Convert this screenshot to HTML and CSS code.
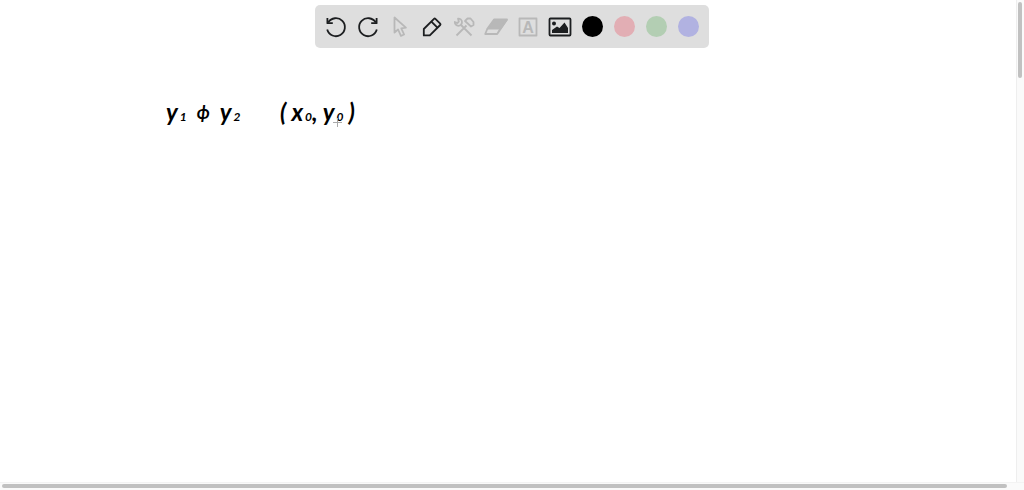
FILE: index.html
```html
<!DOCTYPE html>
<html lang="en">
<head>
    <meta charset="UTF-8">
    <meta name="viewport" content="width=device-width, initial-scale=1.0">
    <title>Whiteboard</title>
    <link rel="stylesheet" href="styles.css">
</head>
<body>
    <header class="toolbar" role="toolbar" aria-label="Drawing tools">
        <button type="button" class="tool" aria-label="Undo">
            <svg viewBox="0 0 24 24"><path d="M4.2 7.5A9 9 0 1 1 3.2 14.6"/><path d="M3.4 3v5.2h5.4"/></svg>
        </button>
        <button type="button" class="tool" aria-label="Redo">
            <svg viewBox="0 0 24 24"><path d="M19.8 7.5A9 9 0 1 0 20.8 14.6"/><path d="M20.6 3v5.2h-5.4"/></svg>
        </button>
        <button type="button" class="tool muted" aria-label="Select">
            <svg viewBox="0 0 24 24"><path d="M6.5 2.5v15l3.6-3 2.8 6.4 3.2-1.4-2.8-6.2 4.6-.6z"/></svg>
        </button>
        <button type="button" class="tool" aria-label="Pen">
            <svg viewBox="0 0 24 24"><path d="M3.8 20.4V14L14 3.8a1 1 0 0 1 1.4 0l4.8 4.8a1 1 0 0 1 0 1.4L9.8 20.4z"/><path d="M11.4 6.6l6 6"/></svg>
        </button>
        <button type="button" class="tool muted" aria-label="Tools">
            <svg viewBox="0 0 24 24"><path d="M4.5 20.5L14.5 10.5M19.5 20.5L9 10"/><path d="M13 6l2.5-2.5h3L21.5 7v3L19 11.5z"/><path d="M6 3.6A3.6 3.6 0 1 1 2.8 7l2.6 1 1.4-1.4z"/></svg>
        </button>
        <button type="button" class="tool muted" aria-label="Eraser">
            <svg viewBox="0 0 24 24"><path class="solid" d="M10 4.5h13l-6.5 9h-13z"/><path d="M3.5 13.5L1.2 19h12L23 4.5M13.2 19l3.3-5.5"/></svg>
        </button>
        <button type="button" class="tool muted" aria-label="Text">
            <svg viewBox="0 0 24 24"><path d="M3.5 3.5h17v17h-17z"/><text x="12" y="18" text-anchor="middle">A</text></svg>
        </button>
        <button type="button" class="tool" aria-label="Image">
            <svg viewBox="0 0 24 24"><rect x="1.5" y="3.5" width="21" height="17" rx="1"/><circle class="dot" cx="6" cy="8.5" r="2"/><path class="shape" d="M4 18V15l5-3.5 2.5 1.5 5-5.5L20 13v5z"/></svg>
        </button>
        <button type="button" class="tool" aria-label="Black"><span class="swatch black"></span></button>
        <button type="button" class="tool" aria-label="Red"><span class="swatch red"></span></button>
        <button type="button" class="tool" aria-label="Green"><span class="swatch green"></span></button>
        <button type="button" class="tool" aria-label="Blue"><span class="swatch blue"></span></button>
    </header>

    <main class="board">
        <p class="note note-solutions"><span>y<sub>1</sub></span> <span class="sign">ϕ</span> <span>y<sub>2</sub></span></p>
        <p class="note note-point"><span>(</span><span>x<sub>0</sub>,</span> <span>y<sub>0</sub></span><span>)</span></p>
        <svg class="cursor" viewBox="0 0 9 9" aria-hidden="true"><path d="M4.5 0v9M0 4.5h9"/></svg>
    </main>

    <div class="scrollbar vertical"><div class="thumb"></div></div>
    <div class="scrollbar horizontal"><div class="thumb"></div></div>
</body>
</html>
```

FILE: styles.css
```css
* {
    box-sizing: border-box;
}
body {
    display: grid;
    grid-template-columns: 1fr 8px;
    grid-template-rows: 1fr 8px;
    height: 100vh;
    margin: 0;
    background: #fff;
    font-family: Lato, "Liberation Sans", sans-serif;
    overflow: hidden;
}
.toolbar {
    position: absolute;
    top: 5px;
    left: 50%;
    z-index: 1;
    display: flex;
    padding: 5px;
    transform: translateX(-50%);
    background: #dedede;
    border-radius: 5px;
}
.tool {
    display: flex;
    align-items: center;
    justify-content: center;
    width: 32px;
    height: 33px;
    padding: 0;
    border: 0;
    background: none;
    color: #1c1e20;
}
.tool.muted {
    color: #b8b8b8;
}
.tool svg {
    width: 24px;
    height: 24px;
    fill: none;
    stroke: currentColor;
    stroke-width: 1.8;
    stroke-linejoin: round;
}
.tool .solid {
    fill: currentColor;
}
.tool .dot,
.tool .shape {
    fill: currentColor;
    stroke: none;
}
.tool text {
    fill: currentColor;
    stroke: none;
    font: bold 16px "Liberation Sans", sans-serif;
}
.swatch {
    width: 21px;
    height: 21px;
    border-radius: 50%;
}
.black {
    background: #000;
}
.red {
    background: #e2aeb4;
}
.green {
    background: #b3ceb3;
}
.blue {
    background: #b1b2e1;
}

/* Notes sit freely on the canvas */
.board {
    position: relative;
}
.note {
    position: absolute;
    top: 98px;
    display: flex;
    margin: 0;
    color: #000;
    font-size: 24px;
    font-style: italic;
    font-weight: bold;
    line-height: 28px;
    white-space: nowrap;
}
.note sub {
    margin-left: 2px;
    font-size: 12px;
    line-height: 0;
    vertical-align: baseline;
}
.note .sign {
    font-size: 18px;
}
.note-solutions {
    left: 166px;
    gap: 10px;
}
.note-point {
    left: 280px;
    gap: 5px;
}
.cursor {
    position: absolute;
    top: 118px;
    left: 333px;
    width: 9px;
    height: 9px;
    stroke: #aaa;
}

.scrollbar {
    padding: 2px 1px;
    background: #fafafa;
}
.vertical {
    border-left: 1px solid #eee;
}
.horizontal {
    grid-column: 1 / -1;
    padding: 1px 2px;
    border-top: 1px solid #f3f3f3;
}
.thumb {
    background: #c1c1c1;
    border-radius: 2px;
}
.vertical .thumb {
    width: 4px;
    height: 16%;
}
.horizontal .thumb {
    width: 98.5%;
    height: 4px;
}
```
